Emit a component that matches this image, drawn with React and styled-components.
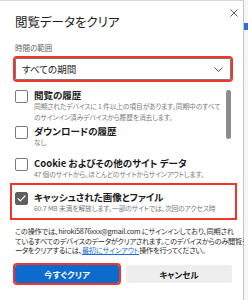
import styled, { createGlobalStyle } from "styled-components";

const GlobalStyle = createGlobalStyle`
  html, body {
    margin: 0;
    padding: 0;
    background: #ffffff;
  }
  body {
    font-family: "Noto Sans CJK JP", "Noto Sans", sans-serif;
    font-feature-settings: "palt";
    color: #1b1b1b;
  }
`;

const Page = styled.div`
  width: 248px;
  height: 300px;
  display: flex;
  overflow: hidden;
`;

const Dialog = styled.div`
  width: 244px;
  height: 300px;
  box-sizing: border-box;
  border-top: 1px solid #d4d4d4;
  border-right: 1px solid #c4c4c4;
  background: #ffffff;
  display: flex;
  flex-direction: column;
`;

const Side = styled.div`
  flex: 1;
  background: #f7f7f7;
  & span {
    display: block;
    margin-top: 23px;
    height: 7px;
    background: #2a73c9;
  }
`;

const Header = styled.div`
  display: flex;
  align-items: flex-start;
  justify-content: space-between;
  padding: 13px 4px 0 15px;
`;

const Title = styled.h1`
  margin: 0;
  font-size: 12.5px;
  line-height: 16px;
  font-weight: 400;
  color: #1b1b1b;
`;

const Close = styled.button`
  border: 0;
  background: none;
  padding: 0;
  margin-top: -6px;
  width: 10px;
  height: 10px;
  display: flex;
  cursor: pointer;
`;

const Body = styled.div`
  display: flex;
  flex-direction: column;
  padding: 0 11px 0 15px;
`;

const Label = styled.div`
  margin-top: 13px;
  font-size: 7.5px;
  line-height: 10px;
  color: #5e5e5e;
`;

const Select = styled.div`
  margin-top: 5px;
  width: 216px;
  height: 22px;
  box-sizing: border-box;
  border: 1px solid #7a7a7a;
  border-radius: 2px;
  outline: 2px solid #f2342a;
  display: flex;
  align-items: center;
  justify-content: space-between;
  padding: 0 7px 0 6px;
  font-size: 9.5px;
  color: #1b1b1b;
`;

const List = styled.div`
  position: relative;
  padding-top: 9px;
  display: flex;
  flex-direction: column;
`;

const Thumb = styled.div`
  position: absolute;
  right: 1px;
  top: 10px;
  width: 5px;
  height: 49px;
  border-radius: 3px;
  background: #8c8c8c;
`;

const Item = styled.div`
  display: flex;
  gap: 6px;
  margin-top: ${(p) => p.$top}px;
  ${(p) =>
    p.$marked &&
    `
    margin-left: -5px;
    margin-right: -5px;
    padding: 6px 0 4.5px 3px;
    border: 2px solid #f2342a;
  `}
`;

const Box = styled.span`
  flex-shrink: 0;
  width: 13px;
  height: 13px;
  margin-top: 1px;
  box-sizing: border-box;
  border-radius: 2px;
  border: 1px solid ${(p) => (p.$checked ? "#5f5f5f" : "#7a7a7a")};
  background: ${(p) => (p.$checked ? "#5f5f5f" : "#ffffff")};
  display: flex;
  align-items: center;
  justify-content: center;
`;

const Texts = styled.div`
  display: flex;
  flex-direction: column;
  min-width: 0;
  flex: 1;
`;

const ItemTitle = styled.div`
  font-size: 9.5px;
  line-height: 12px;
  font-weight: 700;
  color: #1b1b1b;
  white-space: nowrap;
`;

const Desc = styled.div`
  font-size: 6.8px;
  line-height: 10.5px;
  letter-spacing: -0.15px;
  color: #7c7c7c;
  white-space: nowrap;
`;

const Info = styled.p`
  margin: 7px 0 0;
  font-size: 7.2px;
  line-height: 9.5px;
  letter-spacing: -0.25px;
  color: #2b2b2b;
  white-space: nowrap;
  & a {
    color: #1a6fd0;
    text-decoration: underline;
  }
`;

const Buttons = styled.div`
  margin-top: 9.5px;
  display: flex;
  gap: 7px;
`;

const Button = styled.button`
  width: ${(p) => (p.$primary ? 104 : 106)}px;
  height: 18px;
  border: 0;
  border-radius: 2px;
  padding: 0;
  font-family: inherit;
  font-feature-settings: "palt";
  font-size: 8.5px;
  font-weight: 700;
  color: ${(p) => (p.$primary ? "#ffffff" : "#1b1b1b")};
  background: ${(p) => (p.$primary ? "#0c6bcd" : "#eeeeee")};
  outline: ${(p) => (p.$primary ? "2px solid #f2342a" : "none")};
`;

function Check({ checked }) {
  return (
    <Box $checked={checked}>
      {checked && (
        <svg width="9" height="7" viewBox="0 0 9 7" fill="none">
          <path d="M1 3.6L3.3 5.8L8 1" stroke="#fff" strokeWidth="1.2" strokeLinecap="round" strokeLinejoin="round" />
        </svg>
      )}
    </Box>
  );
}

const items = [
  {
    top: 0,
    title: "閲覧の履歴",
    desc: ["同期されたデバイスに 1 件以上の項目があります。同期中のすべて", "のサインイン済みデバイスから履歴を消去します。"],
  },
  { top: 3, title: "ダウンロードの履歴", desc: ["なし"] },
  {
    top: 9.5,
    title: "Cookie およびその他のサイト データ",
    desc: ["47 個のサイトから。ほとんどのサイトからサインアウトします。"],
  },
  {
    top: 3.5,
    title: "キャッシュされた画像とファイル",
    desc: ["60.7 MB 未満を解放します。一部のサイトでは、次回のアクセス時"],
    checked: true,
  },
];

export default function App() {
  return (
    <Page>
      <GlobalStyle />
      <Dialog>
        <Header>
          <Title>閲覧データをクリア</Title>
          <Close aria-label="閉じる">
            <svg width="10" height="10" viewBox="0 0 10 10" fill="none">
              <path d="M1.5 1.5L8.5 8.5M8.5 1.5L1.5 8.5" stroke="#5a5a5a" strokeWidth="1" />
            </svg>
          </Close>
        </Header>
        <Body>
          <Label>時間の範囲</Label>
          <Select>
            <span>すべての期間</span>
            <svg width="9" height="5" viewBox="0 0 9 5" fill="none">
              <path d="M0.5 0.5L4.5 4.5L8.5 0.5" stroke="#444" strokeWidth="0.9" />
            </svg>
          </Select>
          <List>
            <Thumb />
            {items.map((it) => (
              <Item key={it.title} $top={it.top} $marked={it.checked}>
                <Check checked={it.checked} />
                <Texts>
                  <ItemTitle>{it.title}</ItemTitle>
                  {it.desc.map((d) => (
                    <Desc key={d}>{d}</Desc>
                  ))}
                </Texts>
              </Item>
            ))}
          </List>
          <Info>
            この操作では、hiroki5876xxx@gmail.com にサインインしており、同期され
            <br />
            ているすべてのデバイスのデータがクリアされます。このデバイスからのみ閲覧デ
            <br />
            ータをクリアするには、<a href="#">最初にサインアウト</a>操作を行ってください。
          </Info>
          <Buttons>
            <Button $primary>今すぐクリア</Button>
            <Button>キャンセル</Button>
          </Buttons>
        </Body>
      </Dialog>
      <Side>
        <span />
      </Side>
    </Page>
  );
}
